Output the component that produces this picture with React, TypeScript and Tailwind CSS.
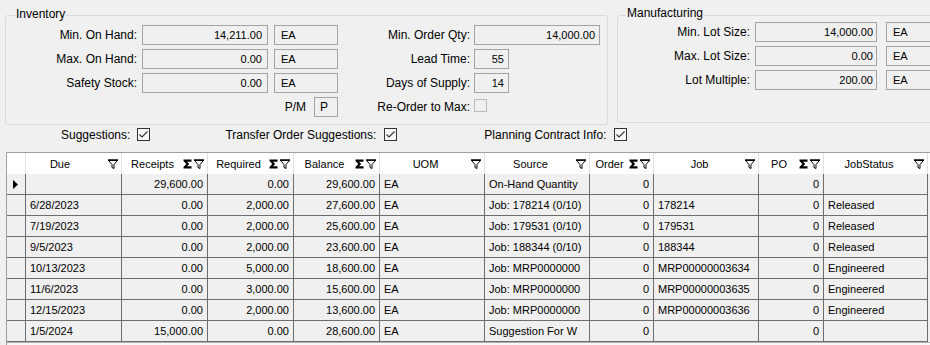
import React from 'react';

const Funnel = () => (
  <svg width="10" height="10" viewBox="0 0 10 10" className="shrink-0">
    <path d="M0.5 1.5 H9.5 L6 5.5 V9.5 L4 8.5 V5.5 Z" fill="none" stroke="#000" strokeWidth="1" />
    <path d="M0 1 H10" stroke="#000" strokeWidth="1.5" />
  </svg>
);

const Sigma = () => (
  <svg width="9" height="10" viewBox="0 0 9 10" className="shrink-0">
    <path d="M0.5 0.5 H8.5 V2.7 H4 L6.2 5 L4 7.3 H8.5 V9.5 H0.5 V8 L3.3 5 L0.5 2 Z" fill="#000" />
  </svg>
);

const Check = ({ checked = true, disabled = false }: { checked?: boolean; disabled?: boolean }) => (
  <div
    className={
      disabled
        ? 'w-[13px] h-[13px] border border-[#bcbcbc] bg-[#f0f0f0] shrink-0'
        : 'w-[13px] h-[13px] border border-[#333333] bg-[#f7f7f7] shrink-0 flex items-center justify-center'
    }
  >
    {checked && !disabled && (
      <svg width="11" height="11" viewBox="0 0 11 11">
        <polyline points="1.5,5.5 4,8 9.5,2.5" fill="none" stroke="#333" strokeWidth="1.1" />
      </svg>
    )}
  </div>
);

const Box = ({ value, className, left = false }: { value: string; className: string; left?: boolean }) => (
  <div
    className={`h-[20px] border border-[#a3a3a3] text-[11px] flex items-center shrink-0 ${left ? 'pl-[6px]' : 'justify-end pr-[4px]'} ${className}`}
  >
    {value}
  </div>
);

type Col = { label: string; w: string; sigma: boolean; num: boolean; hp?: string };

const cols: Col[] = [
  { label: 'Due', w: 'w-[96px]', sigma: false, num: false, hp: 'pr-[14px]' },
  { label: 'Receipts', w: 'w-[86px]', sigma: true, num: true },
  { label: 'Required', w: 'w-[86px]', sigma: true, num: true },
  { label: 'Balance', w: 'w-[86px]', sigma: true, num: true },
  { label: 'UOM', w: 'w-[105px]', sigma: false, num: false },
  { label: 'Source', w: 'w-[105px]', sigma: false, num: false },
  { label: 'Order', w: 'w-[64px]', sigma: true, num: true },
  { label: 'Job', w: 'w-[105px]', sigma: false, num: false },
  { label: 'PO', w: 'w-[65px]', sigma: true, num: true },
  { label: 'JobStatus', w: 'w-[104px]', sigma: false, num: false },
];

const rows = [
  ['', '29,600.00', '0.00', '29,600.00', 'EA', 'On-Hand Quantity', '0', '', '0', ''],
  ['6/28/2023', '0.00', '2,000.00', '27,600.00', 'EA', 'Job: 178214 (0/10)', '0', '178214', '0', 'Released'],
  ['7/19/2023', '0.00', '2,000.00', '25,600.00', 'EA', 'Job: 179531 (0/10)', '0', '179531', '0', 'Released'],
  ['9/5/2023', '0.00', '2,000.00', '23,600.00', 'EA', 'Job: 188344 (0/10)', '0', '188344', '0', 'Released'],
  ['10/13/2023', '0.00', '5,000.00', '18,600.00', 'EA', 'Job: MRP0000000', '0', 'MRP00000003634', '0', 'Engineered'],
  ['11/6/2023', '0.00', '3,000.00', '15,600.00', 'EA', 'Job: MRP0000000', '0', 'MRP00000003635', '0', 'Engineered'],
  ['12/15/2023', '0.00', '2,000.00', '13,600.00', 'EA', 'Job: MRP0000000', '0', 'MRP00000003636', '0', 'Engineered'],
  ['1/5/2024', '15,000.00', '0.00', '28,600.00', 'EA', 'Suggestion For W', '0', '', '0', ''],
];

export default function App() {
  return (
    <div
      className="w-[930px] h-[345px] overflow-hidden bg-[#f0f0f0] text-[12px] leading-[14px] text-black"
      style={{ fontFamily: '"Liberation Sans", Arial, sans-serif' }}
    >
      {/* Group boxes */}
      <div className="flex items-start pl-[5px] pt-[15px] gap-[9px]">
        {/* Inventory */}
        <div className="relative w-[603px] h-[110px] shrink-0 border border-[#d5dbe0] rounded-[3px] pt-[9px] flex">
          <span className="absolute left-[9px] top-[-9px] px-[1px] bg-[#f0f0f0]">Inventory</span>
          <div className="flex flex-col gap-[4px] w-[332px]">
            {[
              ['Min. On Hand:', '14,211.00'],
              ['Max. On Hand:', '0.00'],
              ['Safety Stock:', '0.00'],
            ].map(([l, v]) => (
              <div key={l} className="flex items-center">
                <span className="w-[131px] text-right">{l}</span>
                <Box value={v} className="ml-[5px] w-[126px] !pr-[5px]" />
                <Box value="EA" left className="ml-[6px] w-[64px]" />
              </div>
            ))}
            <div className="flex items-center justify-end gap-[8px]">
              <span>P/M</span>
              <Box value="P" left className="w-[24px] !pl-[5px] !text-[12px]" />
            </div>
          </div>
          <div className="flex flex-col gap-[4px]">
            <div className="flex items-center">
              <span className="w-[132px] text-right">Min. Order Qty:</span>
              <Box value="14,000.00" className="ml-[4px] w-[126px]" />
            </div>
            <div className="flex items-center">
              <span className="w-[132px] text-right">Lead Time:</span>
              <Box value="55" className="ml-[4px] w-[35px]" />
            </div>
            <div className="flex items-center">
              <span className="w-[132px] text-right">Days of Supply:</span>
              <Box value="14" className="ml-[4px] w-[35px]" />
            </div>
            <div className="flex items-center h-[20px]">
              <span className="w-[132px] text-right">Re-Order to Max:</span>
              <div className="ml-[4px] -mt-[4px]">
                <Check disabled checked={false} />
              </div>
            </div>
          </div>
        </div>

        {/* Manufacturing */}
        <div className="relative w-[330px] h-[108px] shrink-0 border border-[#d5dbe0] rounded-[3px] pt-[6px] flex flex-col gap-[4px]">
          <span className="absolute left-[8px] top-[-10px] px-[1px] bg-[#f0f0f0]">Manufacturing</span>
          {[
            ['Min. Lot Size:', '14,000.00'],
            ['Max. Lot Size:', '0.00'],
            ['Lot Multiple:', '200.00'],
          ].map(([l, v]) => (
            <div key={l} className="flex items-center">
              <span className="w-[134px] text-right">{l}</span>
              <Box value={v} className="ml-[5px] w-[122px] !pr-[3px]" />
              <Box value="EA" left className="ml-[9px] w-[60px]" />
            </div>
          ))}
        </div>
      </div>

      {/* Options */}
      <div className="flex items-center h-[13px] mt-[3px]">
        <span className="ml-[61px]">Suggestions:</span>
        <div className="ml-[7px]">
          <Check />
        </div>
        <span className="ml-[75px]">Transfer Order Suggestions:</span>
        <div className="ml-[8px]">
          <Check />
        </div>
        <span className="ml-[87px]">Planning Contract Info:</span>
        <div className="ml-[8px]">
          <Check />
        </div>
      </div>

      {/* Grid */}
      <div className="mt-[11px] ml-[6px] border-t border-l border-[#a0a0a0] w-[924px] text-[11px]">
        <div className="flex h-[21px] bg-white">
          <div className="w-[19px] shrink-0 border-r border-[#e2e2e2]" />
          {cols.map((c) => (
            <div key={c.label} className={`${c.w} shrink-0 flex items-center border-r border-[#e2e2e2] pr-[3px]`}>
              <span className={`flex-1 text-center whitespace-nowrap ${c.hp ?? ''}`}>{c.label}</span>
              <div className="flex items-center gap-[2px]">
                {c.sigma && <Sigma />}
                <Funnel />
              </div>
            </div>
          ))}
        </div>
        {rows.map((r, i) => (
          <div key={i} className="flex h-[21px] bg-[#f0f0f0]">
            <div className="w-[19px] shrink-0 border-r border-b border-[#6d6d6d] flex items-center pl-[6px]">
              {i === 0 && (
                <svg width="5" height="9" viewBox="0 0 5 9">
                  <path d="M0 0 L5 4.5 L0 9 Z" fill="#000" />
                </svg>
              )}
            </div>
            {cols.map((c, j) => (
              <div
                key={c.label}
                className={`${c.w} shrink-0 border-r border-b border-[#6d6d6d] flex items-center overflow-hidden whitespace-nowrap ${
                  c.num ? 'justify-end pr-[4px]' : 'pl-[4px]'
                }`}
              >
                {r[j]}
              </div>
            ))}
          </div>
        ))}
        <div className="h-[4px] bg-[#f7f7f7] border-t border-[#b0b0b0]" />
      </div>
    </div>
  );
}
